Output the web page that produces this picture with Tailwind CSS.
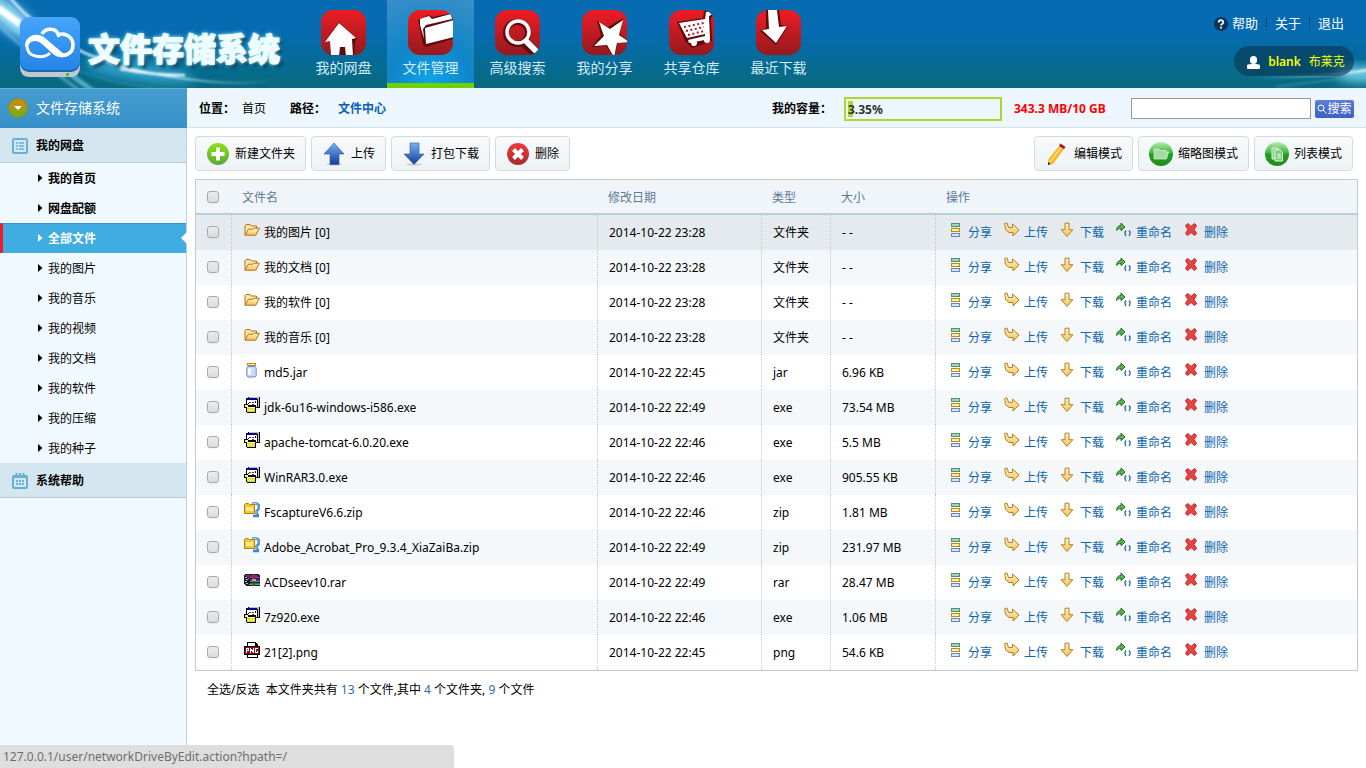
<!DOCTYPE html>
<html lang="zh-CN">
<head>
	<meta charset="utf-8">
	<meta name="viewport" content="width=device-width, initial-scale=1">
	<title>文件存储系统</title>
	<script src="https://cdn.jsdelivr.net/npm/@tailwindcss/browser@4"></script>
</head>
<body class="min-h-screen flex flex-col bg-white text-black text-xs font-['Noto_Sans','Noto_Sans_CJK_SC',sans-serif]">

<!-- icon sprite -->
<svg class="absolute" width="0" height="0" aria-hidden="true">
	<defs>
		<linearGradient id="gRed" x1="0" y1="0" x2="0" y2="1"><stop offset="0" stop-color="#ee1c25"/><stop offset="1" stop-color="#931a1e"/></linearGradient>
		<linearGradient id="gFolder" x1="0" y1="0" x2="0" y2="1"><stop offset="0" stop-color="#fff6c8"/><stop offset="1" stop-color="#f3c057"/></linearGradient>
		<linearGradient id="gBlue" x1="0" y1="0" x2="0" y2="1"><stop offset="0" stop-color="#79b2ee"/><stop offset="1" stop-color="#153b9c"/></linearGradient>
		<linearGradient id="gGreen" x1="0" y1="0" x2="0" y2="1"><stop offset="0" stop-color="#8fe01c"/><stop offset="1" stop-color="#5aa838"/></linearGradient>
		<linearGradient id="gOrb" x1="0" y1="0" x2="0" y2="1"><stop offset="0" stop-color="#b5ecb0"/><stop offset=".45" stop-color="#41b73c"/><stop offset=".5" stop-color="#23a01f"/><stop offset="1" stop-color="#238a22"/></linearGradient>
		<linearGradient id="gDel" x1="0" y1="0" x2="0" y2="1"><stop offset="0" stop-color="#f0393a"/><stop offset="1" stop-color="#a92a2c"/></linearGradient>
	</defs>
	<symbol id="i-folder" viewBox="0 0 16 16">
		<path d="M1 13V3.500L2 2.500h4l1.200 1.500h5.300V7" fill="#fbe7a6" stroke="#b6721b"/>
		<path d="M1 13.200 4.500 7.200H9l1-1h5.300L11.800 13.200z" fill="url(#gFolder)" stroke="#b6721b" stroke-linejoin="round"/>
	</symbol>
	<symbol id="i-jar" viewBox="0 0 16 16">
		<path d="M4 4.500 2.800 6v7.500L4 15h7l1.200-1.500V6L11 4.500z" fill="#c9dcf4" stroke="#6f8fbf"/>
		<path d="M5.500 6.500v6" stroke="#fff" stroke-width="3"/>
		<rect x="3.500" y="1.500" width="8" height="2" fill="#fbe9a0" stroke="#b8902a"/>
	</symbol>
	<symbol id="i-exe" viewBox="0 0 16 16" shape-rendering="crispEdges">
		<path d="M4 0h12v11H4z" fill="#000"/>
		<path d="M5 0h10v10H5z" fill="#c0c0c0"/>
		<path d="M3 1h10v9H3z" fill="#fff"/>
		<path d="M3 1h10v2H3z" fill="#000080"/>
		<path d="M2 1h1v8H2zM13 2h1v9h-1z" fill="#000"/>
		<path d="M5 5h2v1H5zM8 5h2v1H8z" fill="#e00000"/><path d="M11 4h1v2h-1zM4 6h1v1H4z" fill="#0000c0"/><path d="M8 7h2v1H8z" fill="#008080"/>
		<path d="M0 7h4v1h8v7l-1 1H3l-1-1v-4H0z" fill="#000"/>
		<path d="M1 8h3v2h7v1H3v-1H1z" fill="#ffff80"/>
		<path d="M3 11h8v4H3z" fill="#d9d92a"/>
		<path d="M3 12h1v1H3zM5 12h1v1H5zM7 12h1v1H7zM9 12h1v1H9zM4 13h1v1H4zM6 13h1v1H6zM8 13h1v1H8z" fill="#fffca0"/>
	</symbol>
	<symbol id="i-zip" viewBox="0 0 16 16">
		<path d="M8 1.500h4.500l2 1.500v4l-2 2v4H15M9 14h6" fill="none" stroke="#3c82c8" stroke-width="2.600"/>
		<path d="M8.500 1.500h4l1.300 1.600v3.500L12 8.500v5" fill="none" stroke="#9bd0f7"/>
		<path d="M.5 2.500 1.500 1.500h3l1 1h5v9H.5z" fill="#f6c630" stroke="#b57d14"/>
		<path d="M2 5h7v4H2z" fill="#ffec8d"/>
	</symbol>
	<symbol id="i-rar" viewBox="0 0 16 16" shape-rendering="crispEdges">
		<path d="M1 2h14l1 2v10H2l-2-2V3z" fill="#1a1a22"/>
		<path d="M1 3h13v2H2z" fill="#8c1b6b"/><path d="M6 5h10v1H6z" fill="#c9309b"/>
		<path d="M6 7h10v2H6z" fill="#2d35a8"/><path d="M6 9h10v1H6z" fill="#7079dc"/>
		<path d="M6 11h10v1H6z" fill="#15852b"/><path d="M5 12h11v1H5z" fill="#35c054"/>
		<path d="M1 5h2v1H1zM2 7h2v1H2zM1 9h2v1H1zM2 11h2v1H2zM4 6h1v1H4z" fill="#b4b4b4"/>
		<path d="M9 2h2v12H9z" fill="#5b4436"/><path d="M8 7h4v2H8z" fill="#b9a38e"/>
	</symbol>
	<symbol id="i-png" viewBox="0 0 16 16" shape-rendering="crispEdges">
		<path d="M3 0h8l3 3v13H3z" fill="#000"/><path d="M4 1h7v3h2v11H4z" fill="#fff"/>
		<path d="M0 4h16v9H0z" fill="#000"/><path d="M1 5h14v7H1z" fill="#8c0d12"/>
		<path d="M2.500 11V6.500h2v2h-2M6.500 11V6.500l3 4V6M14 6.500h-2.500v4H13.500v-2" fill="none" stroke="#fff"/>
	</symbol>
	<symbol id="i-share" viewBox="0 0 16 16">
		<rect x="3.500" y="1.500" width="8" height="3" fill="#a8d5a2" stroke="#4f9176"/>
		<rect x="3.500" y="6.500" width="8" height="3" fill="#fdf0a4" stroke="#b58b1f"/>
		<rect x="3.500" y="11.500" width="8" height="3" fill="#d5e4f7" stroke="#6787b8"/>
	</symbol>
	<symbol id="i-up" viewBox="0 0 16 16">
		<path d="M.7 1.500 3 1l1.500 4.500H8.500V2L15 8l-6 6v-3.500H5L1.500 7.500z" fill="url(#gFolder)" stroke="#b67f22" stroke-linejoin="round"/>
	</symbol>
	<symbol id="i-down" viewBox="0 0 16 16">
		<path d="M5 1.200h4v6.500h3.800L7 14.500 1.200 7.700H5z" fill="url(#gFolder)" stroke="#b67f22" stroke-linejoin="round"/>
	</symbol>
	<symbol id="i-rename" viewBox="0 0 16 16">
		<path d="M.6 8.500C.6 5 2.500 3.500 5 3.500V1l4 4-4 3.700V6.500C3 6.400 2 7 .6 8.500z" fill="#5fb34c" stroke="#256d2a" stroke-linejoin="round"/>
		<path d="M10 8.500Q8 11 10 14M13 8.500q2.200 2.500 0 5.500" fill="none" stroke="#2f6f9f" stroke-width="1.400"/>
	</symbol>
	<symbol id="i-del" viewBox="0 0 16 16">
		<path d="M1.500 3.500 4 1.500 7 4.500 10.500 1.500 12.500 3.500 10 7.500 12.700 11.500 10.500 13.500 7 10.500 3.700 13.500 1.500 11.500 4 7.500z" fill="#e5443f" stroke="#c3222c" stroke-linejoin="round"/>
	</symbol>
</svg>

<header class="relative h-[88px] flex shrink-0 overflow-hidden bg-linear-to-b from-[#066bb0] from-40% to-[#0a6a7c]">
	<!-- light streaks behind the logo and the user box -->
	<svg class="absolute left-0 top-0" width="320" height="88" fill="none">
		<defs>
			<filter id="b1" x="-50%" y="-50%" width="200%" height="200%"><feGaussianBlur stdDeviation="1"/></filter>
			<filter id="b6" x="-50%" y="-50%" width="200%" height="200%"><feGaussianBlur stdDeviation="6"/></filter>
			<linearGradient id="gFade" gradientUnits="userSpaceOnUse" x1="0" y1="0" x2="280" y2="0"><stop offset="0" stop-color="#e6faff"/><stop offset=".55" stop-color="#d5f6ff"/><stop offset="1" stop-color="#5fc4dc" stop-opacity="0"/></linearGradient>
		</defs>
		<ellipse cx="8" cy="16" rx="36" ry="12" transform="rotate(38 8 16)" fill="#9fe2fb" filter="url(#b6)"/>
		<ellipse cx="140" cy="72" rx="55" ry="8" transform="rotate(8 140 72)" fill="#3fb6e2" opacity=".8" filter="url(#b6)"/>
		<g filter="url(#b1)">
			<path d="M-5 2Q40 55 95 92" stroke="#7fd0f0" stroke-width="5" opacity=".6"/>
			<path d="M-5 22Q35 60 82 92" stroke="#7fd0e4" stroke-width="3" opacity=".5"/>
			<path d="M10 -2Q60 56 150 73T280 78" stroke="url(#gFade)" stroke-width="2"/>
			<path d="M120 69Q150 75 185 75" stroke="#fff" stroke-width="2"/>
			<path d="M-2 8 20 24" stroke="#fff" stroke-width="7"/>
			<path d="M30 50Q110 92 200 90" stroke="#48b8cf" opacity=".5"/>
		</g>
	</svg>
	<svg class="absolute right-0 top-0" width="160" height="88" fill="none">
		<defs><linearGradient id="gFlare" gradientUnits="userSpaceOnUse" x1="40" y1="0" x2="160" y2="0"><stop offset="0" stop-color="#5fc4dc" stop-opacity="0"/><stop offset="1" stop-color="#fff"/></linearGradient></defs>
		<ellipse cx="154" cy="74" rx="24" ry="7" fill="#7fdcf6" filter="url(#b6)"/>
		<path d="M20 77Q110 79 162 70" stroke="url(#gFlare)" stroke-width="2" filter="url(#b1)"/>
		<path d="M70 87Q120 80 162 76" stroke="#49b4cf" stroke-width="2" opacity=".4" filter="url(#b1)"/>
	</svg>

	<a href="#" class="relative w-[300px] shrink-0 flex items-center pl-5 pt-1.5">
		<svg width="60" height="60" viewBox="0 0 60 60">
			<defs><linearGradient id="gLogo" x1="0" y1="0" x2="0" y2="1"><stop offset="0" stop-color="#45a4fa"/><stop offset="1" stop-color="#2585e6"/></linearGradient></defs>
			<path d="M0 40h60v10q0 10-10 10H10Q0 60 0 50z" fill="#c3c8cc"/>
			<rect y="2" width="60" height="53" rx="9" fill="#1767bd"/>
			<rect width="60" height="53" rx="9" fill="url(#gLogo)"/>
			<path d="M46 57.500h3" stroke="#49c02c" stroke-width="3"/>
			<path d="M22 17C25 11 36 10 38.500 18C45 15 53 20 53 28C53 37 43 42 35 35" fill="none" stroke="#fff" stroke-width="3.600"/>
			<path d="M30 36C24 42 7 41 7 29" fill="none" stroke="#fff" stroke-width="3"/>
			<path d="M5 30C4 19 17 14 25 21L38 32C41 35 44 37 47 37L44 40C40 41 36 40 32 36L22 27C17 22 9 23 8 30z" fill="#fff"/>
		</svg>
		<span class="ml-2 pt-1 text-[32px] leading-10 font-black text-[#effcff] [text-shadow:0_0_3px_#a6efff,0_0_5px_#7fdcf0,3px_3px_3px_#05304a] [-webkit-text-stroke:1px_#effcff]">文件存储系统</span>
	</a>

	<nav class="relative flex text-sm leading-5 text-[#d5edf8]">
		<a href="#" class="w-[87px] flex flex-col items-center pt-2.5">
			<svg class="rounded-xl mb-[3px]" width="45" height="45" viewBox="0 0 45 45"><rect width="45" height="45" fill="url(#gRed)"/><path d="M18 12 36 29l-2 3-1 15H9V30l-5 2z" fill="#5e0b0d"/><path d="M18 13 35 28l-4 1 1 17h-7l-1-9h-5l-1 9h-8L9 31l-5 1z" fill="#fff"/></svg>
			我的网盘
		</a>
		<a href="#" class="w-[87px] flex flex-col items-center pt-2.5 border-b-5 border-[#6cd300] bg-[radial-gradient(circle_at_50%_100%,#0fa4e8_0%,#1085c8_45%,#3a8fc6_100%)]">
			<svg class="rounded-xl mb-[3px]" width="45" height="45" viewBox="0 0 45 45"><rect width="45" height="45" fill="url(#gRed)"/><path d="M10 10 21 5l3 2 21-4v26L18 37l-3-3z" fill="#5e0b0d"/><path d="M12 9l9-3 3 3 19-5 1 5-26 6-3 4 1 10-4-14z" fill="#fff"/><path d="M17 18 46 10v17L18 34z" fill="#fff"/></svg>
			文件管理
		</a>
		<a href="#" class="w-[87px] flex flex-col items-center pt-2.5">
			<svg class="rounded-xl mb-[3px]" width="45" height="45" viewBox="0 0 45 45" fill="none"><rect width="45" height="45" fill="url(#gRed)"/><circle cx="22" cy="23" r="11" stroke="#5e0b0d" stroke-width="6"/><path d="m28 31 14 13" stroke="#5e0b0d" stroke-width="10"/><circle cx="23" cy="22" r="11" stroke="#fff" stroke-width="3.500"/><path d="m30 30 12 12" stroke="#fff" stroke-width="6"/></svg>
			高级搜索
		</a>
		<a href="#" class="w-[87px] flex flex-col items-center pt-2.5">
			<svg class="rounded-xl mb-[3px]" width="45" height="45" viewBox="0 0 45 45"><rect width="45" height="45" fill="url(#gRed)"/><path d="m15 11 11 6 15-9-3 16 9 8-11 1-4 14-8-11-14 1 9-12z" fill="#5e0b0d"/><path d="m17 12 11 7 13-9-4 15 10 7-12 1-3 14-7-12-13 1 10-10z" fill="#fff"/></svg>
			我的分享
		</a>
		<a href="#" class="w-[87px] flex flex-col items-center pt-2.5">
			<svg class="rounded-xl mb-[3px]" width="45" height="45" viewBox="0 0 45 45"><rect width="45" height="45" fill="url(#gRed)"/><path d="m8 12 26-4 1-7 9-2 1 6-3 3 1 23-20 7-7-7z" fill="#5e0b0d"/><path d="m10 13 26-4 1-7 7-1v3l-4 2 1 23-21 4-1-3 17-4v-2l-18 4z" fill="#fff"/><circle cx="25" cy="33" r="3" fill="#fff"/><circle cx="38" cy="30" r="3" fill="#fff"/><path d="m15 17 20-4M17 21l18-4M19 25l16-4" stroke="#a8191d" stroke-width="2" stroke-dasharray="2 2.500"/></svg>
			共享仓库
		</a>
		<a href="#" class="w-[87px] flex flex-col items-center pt-2.5">
			<svg class="rounded-xl mb-[3px]" width="45" height="45" viewBox="0 0 45 45"><rect width="45" height="45" fill="url(#gRed)"/><path d="M10 0h13l2 15 7 1-12 19L4 21l6-3z" fill="#5e0b0d"/><path d="M12 0h9l2 17 8-1-11 17L6 20l7-1z" fill="#fff"/></svg>
			最近下载
		</a>
	</nav>

	<div class="relative ml-auto flex flex-col items-end pt-3.5 pr-3 text-white">
		<div class="flex items-center h-5 text-[13px] pr-2.5">
			<svg class="mr-1" width="14" height="14" viewBox="0 0 14 14"><circle cx="7" cy="7" r="7" fill="#0a3557"/><path d="M4.700 5.500C4.700 2.500 9.300 2.500 9.300 5.200 9.300 7 7 6.800 7 8.600M7 9.800v1.700" stroke="#fff" stroke-width="1.800" fill="none"/></svg>
			<a href="#">帮助</a>
			<span class="h-3 mx-2 border-l border-dotted border-[#0a2f4b]"></span>
			<a href="#">关于</a>
			<span class="h-3 mx-2 border-l border-dotted border-[#0a2f4b]"></span>
			<a href="#">退出</a>
		</div>
		<a href="#" class="mt-3 w-[120px] h-[30px] rounded-full bg-[#0a3350]/60 flex items-center justify-center pl-1 pt-0.5 text-[#f6ff00]">
			<svg class="mr-2" width="13" height="13" viewBox="0 0 13 13" fill="#fff"><rect x="3" width="7" height="8" rx="3.500"/><path d="M0 12V9.500Q0 8 4 8h5q4 0 4 1.500V12q0 1-1 1H1q-1 0-1-1z"/></svg>
			<b class="font-semibold">blank</b><span class="ml-2">布莱克</span>
		</a>
	</div>
</header>

<div class="flex-1 flex">
	<aside class="w-[187px] shrink-0 bg-[#f0f9ff] border-r border-[#b5d0d9]">
		<h1 class="-mr-px h-10 flex items-center pl-2 pb-0.5 gap-2 text-sm text-white bg-linear-to-b from-[#469ccf] to-[#3591c8] border-t border-[#5cb1df]">
			<svg width="20" height="20" viewBox="0 0 20 20"><defs><linearGradient id="gOr" x1="0" y1="0" x2="0" y2="1"><stop offset="0" stop-color="#dc850f"/><stop offset="1" stop-color="#65b41d"/></linearGradient></defs><circle cx="10" cy="10" r="9.500" fill="url(#gOr)" stroke="#8b8b2a"/><path d="M6 8h8l-4 4z" fill="#fff"/></svg>
			文件存储系统
		</h1>
		<h2 class="h-[35px] flex items-center pl-3 pt-0.5 gap-2 font-bold bg-[#d4e6f0] border-b border-[#b5cbd5]">
			<svg width="16" height="16" viewBox="0 0 16 16" fill="none" stroke="#65b2d6"><rect x="1" y="1" width="14" height="14" rx="1" stroke-width="2"/><path d="M4 5h2M4 8h2M4 11h2M7 5h5M7 8h5M7 11h5" stroke-width="1.500"/></svg>
			我的网盘
		</h2>
		<ul id="menu"></ul>
		<h2 class="h-[35px] flex items-center pl-3 pt-0.5 gap-2 font-bold bg-[#d4e6f0] border-b border-[#b5cbd5]">
			<svg width="16" height="16" viewBox="0 0 16 16" fill="none" stroke="#65b2d6"><rect x="1" y="3" width="14" height="12" rx="1" stroke-width="2"/><path d="M1 4h14M4.500 0v4M8 0v4M11.500 0v4" stroke-width="2"/><path d="M4 8h8M4 11h8" stroke-width="2" stroke-dasharray="2 1"/></svg>
			系统帮助
		</h2>
	</aside>

	<main class="flex-1 min-w-0">
		<div class="h-10 flex items-center pl-3 pr-3 pt-0.5 bg-[#edf6fc] border-b border-[#d3e2ec]">
			<b>位置：</b>
			<a href="#" class="ml-[7px]">首页</a>
			<b class="ml-6">路径：</b>
			<a href="#" class="ml-3 font-bold text-[#0a5fb8]">文件中心</a>
			<b class="ml-auto">我的容量：</b>
			<div class="ml-3 w-[158px] h-6 border-2 border-[#b0d52f] p-0.5 font-bold text-[#333]">
				<div class="h-4 leading-[18px] whitespace-nowrap bg-[#b0d52f]" style="width:3.35%">3.35%</div>
			</div>
			<b class="ml-3 w-[99px] whitespace-nowrap text-[#f00]">343.3 MB/10 GB</b>
			<input type="text" aria-label="搜索" class="ml-[18px] w-[180px] h-[21px] bg-white border border-[#999] px-1">
			<button class="ml-1 w-[39px] h-[18px] flex items-center justify-center rounded-xs bg-linear-to-b from-[#5b7fd6] to-[#3f5fc4] text-white">
				<svg width="10" height="10" viewBox="0 0 10 10" fill="none" stroke="#fff"><circle cx="4" cy="4" r="3"/><path d="m6 6 3.500 3.500"/></svg>搜索
			</button>
		</div>

		<div class="flex gap-[5px] pl-2 pr-[13px] pt-2">
			<button class="h-[35px] px-2.5 flex items-center gap-[5px] border border-[#d3dbde] rounded-sm bg-linear-to-b from-[#f8fafb] to-[#edf2f5]">
				<svg width="24" height="24" viewBox="0 0 24 24"><circle cx="12" cy="12" r="11" fill="url(#gGreen)"/><path d="M12 5.500v13M5.500 12h13" stroke="#fff" stroke-width="4"/></svg>新建文件夹
			</button>
			<button class="h-[35px] px-2.5 flex items-center gap-[5px] border border-[#d3dbde] rounded-sm bg-linear-to-b from-[#f8fafb] to-[#edf2f5]">
				<svg width="24" height="24" viewBox="0 0 24 24"><ellipse cx="12" cy="22.500" rx="8" ry="1" fill="#ccc"/><path d="m12 1 10 11h-5v10.500H8V12H2z" fill="url(#gBlue)" stroke="#2a56a8" stroke-width=".6"/></svg>上传
			</button>
			<button class="h-[35px] px-2.5 flex items-center gap-[5px] border border-[#d3dbde] rounded-sm bg-linear-to-b from-[#f8fafb] to-[#edf2f5]">
				<svg width="24" height="24" viewBox="0 0 24 24"><ellipse cx="12" cy="22.500" rx="8" ry="1" fill="#ccc"/><path d="M8 1h9v11h5L12 22.500 2 12h6z" fill="url(#gBlue)" stroke="#2a56a8" stroke-width=".6"/></svg>打包下载
			</button>
			<button class="h-[35px] px-2.5 flex items-center gap-[5px] border border-[#d3dbde] rounded-sm bg-linear-to-b from-[#f8fafb] to-[#edf2f5]">
				<svg width="24" height="24" viewBox="0 0 24 24"><circle cx="12" cy="12" r="11" fill="url(#gDel)"/><path d="m7.500 7.500 9 9m0-9-9 9" stroke="#fff" stroke-width="4"/></svg>删除
			</button>
			<button class="ml-auto h-[35px] px-2.5 flex items-center gap-[5px] border border-[#d3dbde] rounded-sm bg-linear-to-b from-[#f8fafb] to-[#edf2f5]">
				<svg width="24" height="24" viewBox="0 0 24 24"><path d="M14 4 19 7 8 22 3 23 3.500 17z" fill="#f5b62b"/><path d="M16 5.500 5 20" stroke="#ffdf7a" stroke-width="1.500"/><path d="m14 4 5 3 1.500-2-5-3.500z" fill="#9f1216"/><path d="m3.200 20-.2 3 2.700-1z" fill="#222"/></svg>编辑模式
			</button>
			<button class="h-[35px] px-2.5 flex items-center gap-[5px] border border-[#d3dbde] rounded-sm bg-linear-to-b from-[#f8fafb] to-[#edf2f5]">
				<svg width="24" height="24" viewBox="0 0 24 24"><circle cx="12" cy="12" r="12" fill="url(#gOrb)"/><path d="M5 17V7h5l1 1.500h6V10h2.500L17.500 17z" fill="#a5dba2" stroke="#dff3dd" stroke-width=".7"/></svg>缩略图模式
			</button>
			<button class="h-[35px] px-2.5 flex items-center gap-[5px] border border-[#d3dbde] rounded-sm bg-linear-to-b from-[#f8fafb] to-[#edf2f5]">
				<svg width="24" height="24" viewBox="0 0 24 24"><circle cx="12" cy="12" r="12" fill="url(#gOrb)"/><path d="M7 6h6v11H7z" fill="#8ed08b" stroke="#e3f6e2"/><path d="M10 8h5l2.500 2.500V19H10z" fill="#7ac877" stroke="#e3f6e2"/><path d="M12 12h4M12 14h4M12 16h4" stroke="#e3f6e2"/></svg>列表模式
			</button>
		</div>

		<div class="pl-2 pr-2 pt-2">
			<table class="w-full table-fixed border-separate border-spacing-0 border border-[#c4cbcf]">
				<colgroup><col class="w-9"><col class="w-[366px]"><col class="w-[164px]"><col class="w-[69px]"><col class="w-[105px]"><col></colgroup>
				<thead>
					<tr class="h-[35px] text-left text-[#5f7896] bg-[#eff5f8] [&>th]:font-normal [&>th]:pl-2.5 [&>th]:pt-0.5 [&>th]:border-b-2 [&>th]:border-[#b9d0d4]">
						<th><input type="checkbox" aria-label="全选" class="block ml-px mb-0.5 size-3 appearance-none rounded-[3px] border border-[#aaa] bg-linear-to-b from-[#ececec] to-[#dcdcdc] shadow-xs"></th>
						<th>文件名</th><th>修改日期</th><th>类型</th><th>大小</th><th>操作</th>
					</tr>
				</thead>
				<tbody id="files"></tbody>
			</table>
			<p class="mt-[9px] pl-3 leading-5 whitespace-pre"><a href="#">全选/反选</a>  本文件夹共有 <span class="text-[#3369a8]">13</span> 个文件,其中 <span class="text-[#3369a8]">4</span> 个文件夹, <span class="text-[#3369a8]">9</span> 个文件</p>
		</div>
	</main>
</div>

<div class="fixed left-0 bottom-0 w-[454px] h-[23px] pl-[3px] leading-[23px] rounded-tr bg-[#dedede] text-[#6f6f6f]">127.0.0.1/user/networkDriveByEdit.action?hpath=/</div>

<script>
	var menu = ['我的首页', '网盘配额', '全部文件', '我的图片', '我的音乐', '我的视频', '我的文档', '我的软件', '我的压缩', '我的种子'];
	document.getElementById('menu').innerHTML = menu.map(function (name, i) {
		var cls = 'h-[30px] flex items-center gap-[5px] pl-[38px] pt-0.5';
		if (i < 2) cls += ' font-bold';
		if (i === 2) cls = 'relative h-[30px] flex items-center gap-[5px] pl-[35px] font-bold text-white bg-[#3fade1] border-l-3 border-l-[#ee1c25] border-t border-t-[#3594c5]';
		var notch = i === 2 ? '<svg class="absolute -right-px top-2" width="6" height="12" viewBox="0 0 6 12"><path d="M6 0v12L0 6z" fill="#fff"/></svg>' : '';
		return '<li><a href="#" class="' + cls + '"><svg class="mb-0.5" width="5" height="8" viewBox="0 0 5 8"><path d="M0 0l4.500 4L0 8z" fill="currentColor"/></svg>' + name + notch + '</a></li>';
	}).join('');

	var files = [
		['folder', '我的图片 [0]', '2014-10-22 23:28', '文件夹', '- -'],
		['folder', '我的文档 [0]', '2014-10-22 23:28', '文件夹', '- -'],
		['folder', '我的软件 [0]', '2014-10-22 23:28', '文件夹', '- -'],
		['folder', '我的音乐 [0]', '2014-10-22 23:28', '文件夹', '- -'],
		['jar', 'md5.jar', '2014-10-22 22:45', 'jar', '6.96 KB'],
		['exe', 'jdk-6u16-windows-i586.exe', '2014-10-22 22:49', 'exe', '73.54 MB'],
		['exe', 'apache-tomcat-6.0.20.exe', '2014-10-22 22:46', 'exe', '5.5 MB'],
		['exe', 'WinRAR3.0.exe', '2014-10-22 22:46', 'exe', '905.55 KB'],
		['zip', 'FscaptureV6.6.zip', '2014-10-22 22:46', 'zip', '1.81 MB'],
		['zip', 'Adobe_Acrobat_Pro_9.3.4_XiaZaiBa.zip', '2014-10-22 22:49', 'zip', '231.97 MB'],
		['rar', 'ACDseev10.rar', '2014-10-22 22:49', 'rar', '28.47 MB'],
		['exe', '7z920.exe', '2014-10-22 22:46', 'exe', '1.06 MB'],
		['png', '21[2].png', '2014-10-22 22:45', 'png', '54.6 KB']
	];
	var ops = [['share', '分享'], ['up', '上传'], ['down', '下载'], ['rename', '重命名'], ['del', '删除']];

	function icon(id) {
		return '<svg class="size-4 mb-[5px] shrink-0"><use href="#i-' + id + '"/></svg>';
	}

	document.getElementById('files').innerHTML = files.map(function (f, i) {
		var bg = i === 0 ? 'bg-[#e5eaee]' : i % 2 ? 'bg-[#f4f8fb]' : 'bg-white';
		var td = '<td class="pl-[11px] border-r border-dotted border-[#c7c7c7]">';
		return '<tr class="h-[35px] ' + bg + '">' +
			td + '<input type="checkbox" aria-label="' + f[1] + '" class="block mb-0.5 size-3 appearance-none rounded-[3px] border border-[#aaa] bg-linear-to-b from-[#ececec] to-[#dcdcdc] shadow-xs"></td>' +
			'<td class="pl-3 border-r border-dotted border-[#c7c7c7]"><a href="#" class="flex items-center gap-1">' + icon(f[0]) + f[1] + '</a></td>' +
			td + f[2] + '</td>' + td + f[3] + '</td>' + td + f[4] + '</td>' +
			'<td class="pl-3"><div class="flex gap-3 text-[#0b64ad]">' + ops.map(function (o) {
				return '<a href="#" class="flex items-center gap-1">' + icon(o[0]) + o[1] + '</a>';
			}).join('') + '</div></td></tr>';
	}).join('');
</script>
</body>
</html>
